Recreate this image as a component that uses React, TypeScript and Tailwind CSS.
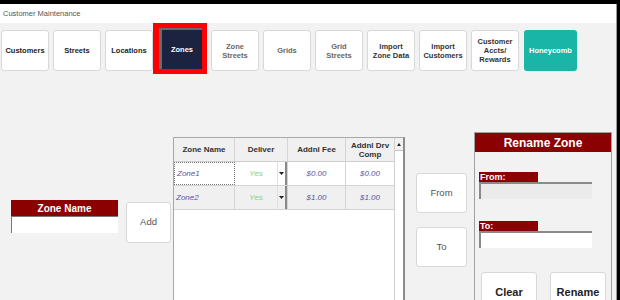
import React from "react";

function NavButton({ lines, cls }: { lines: string[]; cls: string }) {
  return (
    <div
      className={`w-[48px] h-[41px] shrink-0 bg-white border border-[#d8d8d8] rounded-[3px] flex flex-col items-center justify-center text-[7.5px] font-bold leading-[9px] text-center ${cls}`}
    >
      {lines.map((l, i) => (
        <span key={i}>{l}</span>
      ))}
    </div>
  );
}

function DropArrow() {
  return (
    <div className="w-[10px] h-full shrink-0 flex items-center justify-center border-l border-[#e0e0e0] border-r-2 border-r-[#8a8a8a]">
      <svg width="5" height="3" viewBox="0 0 5 3">
        <path d="M0 0 L5 0 L2.5 3 Z" fill="#222" />
      </svg>
    </div>
  );
}

function GridRow({ name, fee, comp, focus, bg }: { name: string; fee: string; comp: string; focus: boolean; bg: string }) {
  return (
    <div className={`flex h-[24px] border-b border-[#d4d4d4] ${bg}`}>
      <div
        className={`w-[61px] shrink-0 flex items-center pl-[2px] text-[8px] italic text-[#5a55a8] ${
          focus ? "border border-dotted border-[#777]" : "border-r border-[#d4d4d4]"
        }`}
      >
        {name}
      </div>
      <div className="w-[53px] shrink-0 flex border-r border-[#d4d4d4]">
        <div className="flex-1 flex items-center justify-center text-[8px] italic text-[#7fd37f]">Yes</div>
        <DropArrow />
      </div>
      <div className="w-[58px] shrink-0 flex items-center justify-center border-r border-[#d4d4d4] text-[8px] italic text-[#55559a]">
        {fee}
      </div>
      <div className="w-[48px] shrink-0 flex items-center justify-center text-[8px] italic text-[#55559a]">
        {comp}
      </div>
    </div>
  );
}

export default function App() {
  return (
    <div className="w-[620px] h-[300px] bg-black overflow-hidden font-['Liberation_Sans',Arial,sans-serif]">
      <div className="mt-[4px] w-[617px] h-[296px] flex flex-col border-r border-[#9a9a9a] bg-[#f2f2f2] overflow-hidden">
        <div className="h-[19px] shrink-0 bg-white flex items-center pl-[3px] text-[7.5px] text-[#555]">
          Customer Maintenance
        </div>

        <div className="flex items-start pt-[7px] pl-[1px] gap-[4px] shrink-0">
          <NavButton lines={["Customers"]} cls="text-[#222]" />
          <NavButton lines={["Streets"]} cls="text-[#222]" />
          <NavButton lines={["Locations"]} cls="text-[#222]" />
          <div className="ml-[-4px] mt-[-7px] w-[54px] h-[51px] shrink-0 border-[5px] border-l-[6px] border-[#ff0000]">
            <div className="w-full h-full bg-[#1c2340] border-t-2 border-l-[3px] border-[#6a6a6a] flex items-center justify-center text-white text-[7.5px] font-bold">
              Zones
            </div>
          </div>
          <NavButton lines={["Zone", "Streets"]} cls="text-[#666]" />
          <NavButton lines={["Grids"]} cls="text-[#666]" />
          <NavButton lines={["Grid", "Streets"]} cls="text-[#666]" />
          <NavButton lines={["Import", "Zone Data"]} cls="text-[#333]" />
          <NavButton lines={["Import", "Customers"]} cls="text-[#333]" />
          <NavButton lines={["Customer", "Accts/", "Rewards"]} cls="text-[#333]" />
          <div className="ml-[1px] w-[53px] h-[41px] shrink-0 bg-[#19b6a8] rounded-[3px] flex items-center justify-center text-white text-[7.5px] font-bold">
            Honeycomb
          </div>
        </div>

        <div className="flex items-start">
          <div className="ml-[11px] mt-[126px] w-[107px] shrink-0">
            <div className="h-[16px] bg-[#8b0000] text-white font-bold text-[10px] flex items-center justify-center">
              Zone Name
            </div>
            <div className="h-[17px] bg-white border-t border-l border-[#777]" />
          </div>

          <div className="ml-[8px] mt-[128px] w-[45px] h-[41px] shrink-0 bg-white border border-[#d8d8d8] rounded-[3px] flex items-center justify-center text-[9.5px] text-[#555]">
            Add
          </div>

          <div className="ml-[2px] mt-[63px] w-[232px] h-[170px] shrink-0 bg-white border-l border-t border-[#a8a8a8] border-r-2 border-r-[#8c8c8c] flex">
            <div className="w-[220px] flex flex-col">
              <div className="flex h-[24px] bg-[#f0f0f0] border-b border-[#cfcfcf] text-[8px] font-bold text-[#333] text-center leading-[9px]">
                <div className="w-[61px] shrink-0 flex items-center justify-center border-r border-[#d4d4d4]">Zone Name</div>
                <div className="w-[53px] shrink-0 flex items-center justify-center border-r border-[#d4d4d4]">Deliver</div>
                <div className="w-[58px] shrink-0 flex items-center justify-center border-r border-[#d4d4d4]">Addnl Fee</div>
                <div className="w-[48px] shrink-0 flex flex-col items-center justify-center">
                  <span>Addnl Drv</span>
                  <span>Comp</span>
                </div>
              </div>
              <GridRow name="Zone1" fee="$0.00" comp="$0.00" focus={true} bg="bg-white" />
              <GridRow name="Zone2" fee="$1.00" comp="$1.00" focus={false} bg="bg-[#f0f0f0]" />
            </div>
            <div className="w-[9px] flex flex-col border-l border-[#d0d0d0]">
              <div className="h-[13px] bg-[#f0f0f0] border-b border-[#c0c0c0] flex items-center justify-center">
                <svg width="4" height="3" viewBox="0 0 4 3">
                  <path d="M0 3 L4 3 L2 0 Z" fill="#222" />
                </svg>
              </div>
            </div>
          </div>

          <div className="ml-[11px] mt-[99px] flex flex-col gap-[14px] shrink-0">
            <div className="w-[51px] h-[40px] bg-white border border-[#d8d8d8] rounded-[3px] flex items-center justify-center text-[9.5px] text-[#555]">
              From
            </div>
            <div className="w-[51px] h-[40px] bg-white border border-[#d8d8d8] rounded-[3px] flex items-center justify-center text-[9.5px] text-[#555]">
              To
            </div>
          </div>

          <div className="ml-[7px] mt-[58px] w-[138px] h-[200px] shrink-0 border border-[#a0a0a0] bg-[#f2f2f2]">
            <div className="h-[19px] bg-[#8b0000] text-white font-bold text-[12px] flex items-center justify-center">
              Rename Zone
            </div>
            <div className="pl-[4px]">
              <div className="mt-[20px] w-[59px] h-[10px] bg-[#8b0000] text-white font-bold text-[9px] leading-[10px] pl-[1px]">
                From:
              </div>
              <div className="w-[113px] h-[17px] bg-[#ebebeb] border-t-2 border-l-2 border-[#8a8a8a]" />
              <div className="mt-[22px] w-[59px] h-[10px] bg-[#8b0000] text-white font-bold text-[9px] leading-[10px] pl-[1px]">
                To:
              </div>
              <div className="w-[113px] h-[17px] bg-white border-t-2 border-l-2 border-[#8a8a8a]" />
              <div className="mt-[24px] ml-[2px] flex gap-[13px]">
                <div className="w-[56px] h-[40px] bg-white border border-[#d8d8d8] rounded-[3px] flex items-center justify-center text-[11px] font-bold text-[#222]">
                  Clear
                </div>
                <div className="w-[56px] h-[40px] bg-white border border-[#d8d8d8] rounded-[3px] flex items-center justify-center text-[11px] font-bold text-[#222]">
                  Rename
                </div>
              </div>
            </div>
          </div>
        </div>
      </div>
    </div>
  );
}
